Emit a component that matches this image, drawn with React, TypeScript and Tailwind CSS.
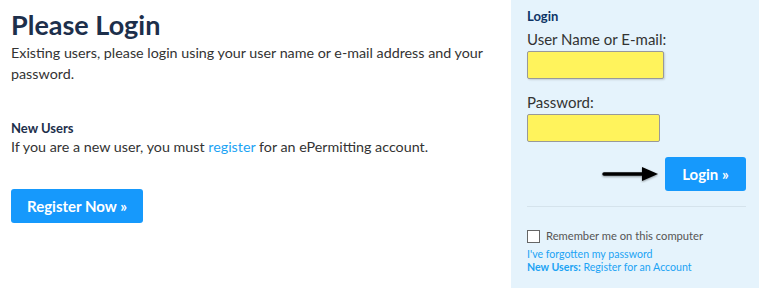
export default function App() {
  return (
    <div className="flex h-[288px] w-[759px] bg-white font-['Lato',sans-serif] text-[#333]">
      {/* Left column */}
      <div className="w-[511px] pl-[11px] pt-[8px]">
        <h1 className="text-[27px] font-bold leading-[34px] text-[#1d2f4b]">Please Login</h1>
        <p className="w-[490px] text-[14.3px] leading-[21px] text-[#333]">
          Existing users, please login using your user name or e-mail address and your password.
        </p>

        <div className="mt-[35px] text-[13px] font-bold leading-[18px] text-[#1d2f4b]">New Users</div>
        <p className="text-[14.3px] leading-[20px]">
          If you are a new user, you must{" "}
          <a className="text-[#1ca3f4]" href="#">register</a> for an ePermitting account.
        </p>

        <button className="mt-[32px] h-[34px] w-[132px] rounded-[3px] bg-[#1699fc] text-[15px] font-bold text-white">
          Register Now »
        </button>
      </div>

      {/* Login panel */}
      <div className="flex-1 bg-[#e5f3fc] pl-[16px] pr-[13px] pt-[7px]">
        <div className="text-[13px] font-bold leading-[18px] text-[#0d3466]">Login</div>
        <label className="mt-[4px] block text-[15px] leading-[20px] text-[#333]">User Name or E-mail:</label>
        <input className="mt-[2px] block h-[28px] w-[137px] rounded-[2px] border border-[#999] bg-[#fff35c] shadow-[1px_1px_2px_rgba(0,0,0,0.15)]" />
        <label className="mt-[13px] block text-[15px] leading-[20px] text-[#333]">Password:</label>
        <input type="password" className="mt-[2px] block h-[28px] w-[133px] rounded-[2px] border border-[#999] bg-[#fff35c]" />

        <div className="mt-[15px] flex items-center justify-end gap-[4px]">
          <svg width="60" height="18" viewBox="0 0 60 18">
            <defs>
              <filter id="sh" x="-20%" y="-50%" width="140%" height="200%">
                <feDropShadow dx="0" dy="1" stdDeviation="1" floodOpacity="0.4" />
              </filter>
            </defs>
            <g filter="url(#sh)">
              <line x1="3" y1="9" x2="44" y2="9" stroke="#000" strokeWidth="3.5" strokeLinecap="round" />
              <polygon points="41,2 57,9 41,16" fill="#000" />
            </g>
          </svg>
          <button className="h-[34px] w-[81px] rounded-[3px] bg-[#1699fc] text-[15px] font-bold text-white">
            Login »
          </button>
        </div>

        <div className="mt-[15px] border-t border-[#d5e3ec]" />

        <label className="mt-[22px] flex items-center gap-[6px] text-[11.2px] leading-[14px] text-[#555]">
          <span className="block h-[13px] w-[13px] border border-[#666] bg-white" />
          Remember me on this computer
        </label>
        <div className="mt-[5px] text-[10.6px] leading-[13px] text-[#1ca3f4]">
          <a href="#">I've forgotten my password</a>
          <div>
            <span className="font-bold">New Users:</span> <a href="#">Register for an Account</a>
          </div>
        </div>
      </div>
    </div>
  );
}
